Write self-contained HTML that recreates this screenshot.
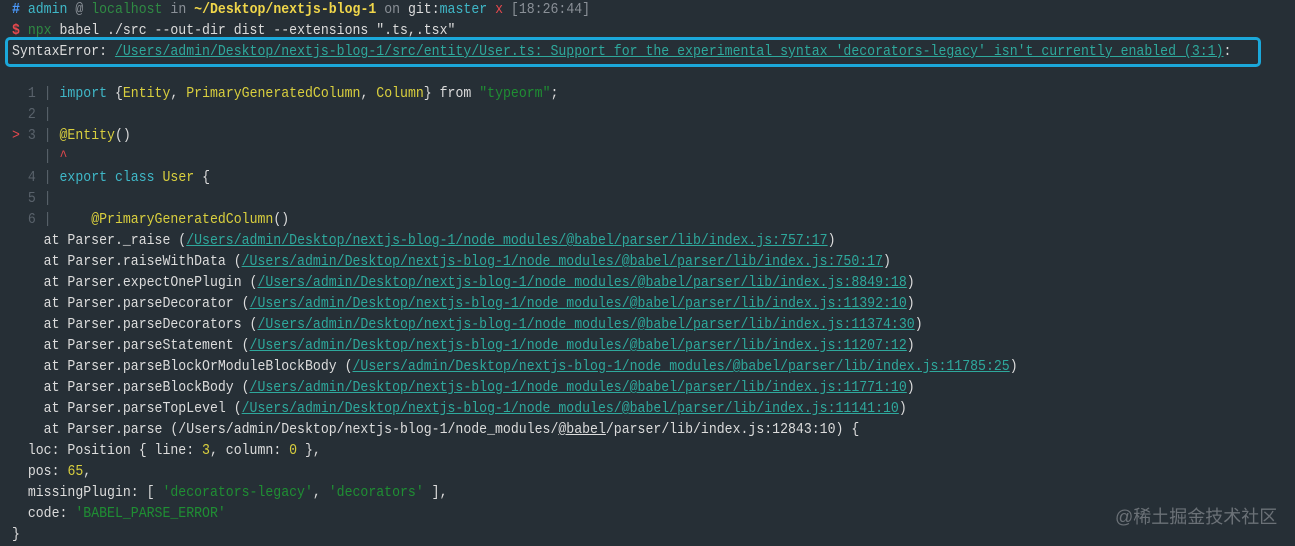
<!DOCTYPE html>
<html><head><meta charset="utf-8"><style>
html,body{margin:0;padding:0;background:#262f36;width:1295px;height:545px;overflow:hidden}
pre{margin:0;position:absolute;left:12px;top:0px;font-family:"Liberation Mono",monospace;font-size:14.5px;line-height:21px;color:#dcdcdc;white-space:pre;transform:scaleX(0.91);transform-origin:0 0}
.b{color:#4b9bff;font-weight:bold}.c{color:#3fb8c8}.g{color:#2f8a43}.y{color:#f0d64a;font-weight:bold}
.r{color:#e5484d}.gr{color:#8a9097}.l{color:#2ea89c;text-decoration:underline}
.k{color:#3fb8c8}.yy{color:#d9cf3e}.n{color:#59626b}.s{color:#1f8f33}.num{color:#d9cf3e}
.box{position:absolute;left:5px;top:37px;width:1250px;height:24px;border:3px solid #1ba8da;border-radius:5px}
.wm{position:absolute;left:1115px;top:503px;font-family:"Liberation Sans","Noto Sans CJK SC",sans-serif;font-size:18px;color:#6b7177}
</style></head><body>
<div class="box"></div>
<pre><span class="b">#</span> <span class="c">admin</span> <span class="gr">@</span> <span class="g">localhost</span> <span class="gr">in</span> <span class="y">~/Desktop/nextjs-blog-1</span> <span class="gr">on</span> git:<span class="c">master</span> <span class="r">x</span> <span class="gr">[18:26:44]</span>
<span class="r" style="font-weight:bold">$</span> <span class="g">npx</span> babel ./src --out-dir dist --extensions ".ts,.tsx"
SyntaxError: <span class="l">/Users/admin/Desktop/nextjs-blog-1/src/entity/User.ts: Support for the experimental syntax 'decorators-legacy' isn't currently enabled (3:1)</span>:

<span class="n">  1 |</span> <span class="k">import</span> {<span class="yy">Entity</span>, <span class="yy">PrimaryGeneratedColumn</span>, <span class="yy">Column</span>} from <span class="s">"typeorm"</span>;
<span class="n">  2 |</span>
<span class="r">&gt;</span><span class="n"> 3 |</span> <span class="yy">@Entity</span>()
<span class="n">    |</span> <span class="r">^</span>
<span class="n">  4 |</span> <span class="k">export</span> <span class="k">class</span> <span class="yy">User</span> {
<span class="n">  5 |</span>
<span class="n">  6 |</span>     <span class="yy">@PrimaryGeneratedColumn</span>()
    at Parser._raise (<span class="l">/Users/admin/Desktop/nextjs-blog-1/node_modules/@babel/parser/lib/index.js:757:17</span>)
    at Parser.raiseWithData (<span class="l">/Users/admin/Desktop/nextjs-blog-1/node_modules/@babel/parser/lib/index.js:750:17</span>)
    at Parser.expectOnePlugin (<span class="l">/Users/admin/Desktop/nextjs-blog-1/node_modules/@babel/parser/lib/index.js:8849:18</span>)
    at Parser.parseDecorator (<span class="l">/Users/admin/Desktop/nextjs-blog-1/node_modules/@babel/parser/lib/index.js:11392:10</span>)
    at Parser.parseDecorators (<span class="l">/Users/admin/Desktop/nextjs-blog-1/node_modules/@babel/parser/lib/index.js:11374:30</span>)
    at Parser.parseStatement (<span class="l">/Users/admin/Desktop/nextjs-blog-1/node_modules/@babel/parser/lib/index.js:11207:12</span>)
    at Parser.parseBlockOrModuleBlockBody (<span class="l">/Users/admin/Desktop/nextjs-blog-1/node_modules/@babel/parser/lib/index.js:11785:25</span>)
    at Parser.parseBlockBody (<span class="l">/Users/admin/Desktop/nextjs-blog-1/node_modules/@babel/parser/lib/index.js:11771:10</span>)
    at Parser.parseTopLevel (<span class="l">/Users/admin/Desktop/nextjs-blog-1/node_modules/@babel/parser/lib/index.js:11141:10</span>)
    at Parser.parse (/Users/admin/Desktop/nextjs-blog-1/node_modules/<u>@babel</u>/parser/lib/index.js:12843:10) {
  loc: Position { line: <span class="num">3</span>, column: <span class="num">0</span> },
  pos: <span class="num">65</span>,
  missingPlugin: [ <span class="s">'decorators-legacy'</span>, <span class="s">'decorators'</span> ],
  code: <span class="s">'BABEL_PARSE_ERROR'</span>
}</pre>
<div class="wm">@稀土掘金技术社区</div>
</body></html>
